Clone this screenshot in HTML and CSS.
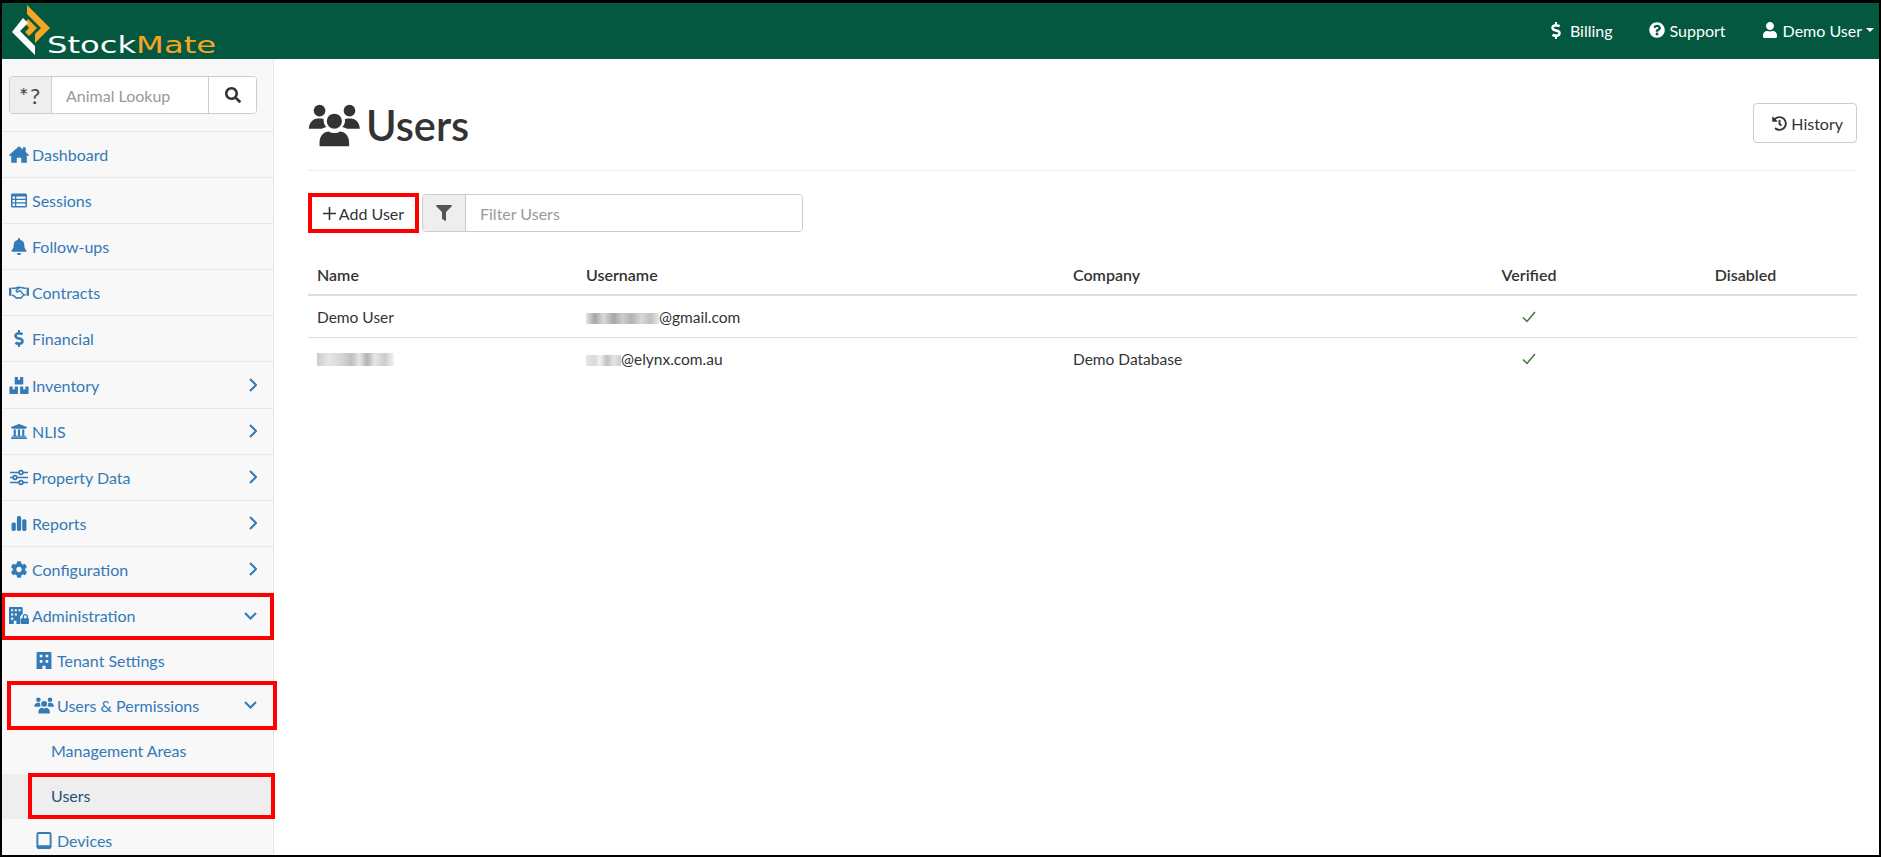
FILE: index.html
```html
<!DOCTYPE html>
<html lang="en">
<head>
    <meta charset="UTF-8">
    <meta name="viewport" content="width=device-width, initial-scale=1.0">
    <title>StockMate - Users</title>
    <link rel="stylesheet" href="styles.css">
</head>
<body>
    <svg class="icon-defs" aria-hidden="true">
        <symbol id="i-users" viewBox="0 0 150 125"><circle cx="33" cy="19" r="17"/><circle cx="120" cy="19" r="17"/><circle cx="76" cy="50" r="22"/><path d="M2 72C2 55 14 42 28 42h10c3 0 5 1 7 2-1 9 2 17 8 23-5 1-10 3-14 5zM150 72c0-17-12-30-26-30h-10c-3 0-5 1-7 2 1 9-2 17-8 23 5 1 10 3 14 5zM33 123v-12c0-18 13-31 27-31 8 6 24 6 32 0 14 0 27 13 27 31v12z"/></symbol>
        <symbol id="i-home" viewBox="0 0 18 15"><path d="M9 0l3.500 3V1H15v4.200L18 8l-1 1-1-.800V15h-5v-4.500H7V15H2V8.200L1 9 0 8z"/></symbol>
        <symbol id="i-search" viewBox="0 0 512 512"><path d="M505 442.7L405.3 343c-4.5-4.5-10.6-7-17-7H372c27.6-35.3 44-79.7 44-128C416 93.1 322.9 0 208 0S0 93.1 0 208s93.1 208 208 208c48.3 0 92.7-16.4 128-44v16.3c0 6.4 2.5 12.5 7 17l99.7 99.7c9.4 9.4 24.6 9.4 33.9 0l28.3-28.3c9.4-9.4 9.4-24.6.1-34zM208 336c-70.7 0-128-57.2-128-128 0-70.7 57.2-128 128-128 70.7 0 128 57.2 128 128 0 70.7-57.2 128-128 128z"/></symbol>
        <symbol id="i-table" viewBox="-2 -1 20 16"><path fill-rule="evenodd" d="M1.500 0h13A1.500 1.500 0 0 1 16 1.500v11a1.500 1.500 0 0 1-1.500 1.500h-13A1.500 1.500 0 0 1 0 12.500v-11A1.500 1.500 0 0 1 1.500 0zM1.500 3v2.300H4V3zm3.800 0v2.300h9.200V3zM1.500 6.500v2.300H4V6.500zm3.800 0v2.300h9.200V6.500zM1.500 10v2.500H4V10zm3.800 0v2.500h9.200V10z"/></symbol>
        <symbol id="i-bell" viewBox="0 0 448 512"><path d="M224 512c35.32 0 63.97-28.65 63.97-64H160.03c0 35.35 28.65 64 63.97 64zm215.39-149.71c-19.32-20.76-55.47-51.99-55.47-154.29 0-77.7-54.48-139.9-127.94-155.16V32c0-17.67-14.32-32-31.98-32s-31.98 14.33-31.98 32v20.84C118.56 68.1 64.08 130.3 64.08 208c0 102.3-36.15 133.53-55.47 154.29-6 6.45-8.66 14.16-8.61 21.71.11 16.4 12.98 32 32.1 32h383.8c19.12 0 32-15.6 32.1-32 .05-7.55-2.61-15.27-8.61-21.71z"/></symbol>
        <symbol id="i-dollar" viewBox="0 0 288 512"><path d="M209.2 233.4l-108-31.6C88.7 198.2 80 186.5 80 173.5c0-16.3 13.2-29.5 29.5-29.5h66.3c12.2 0 24.2 3.7 34.2 10.5 6.1 4.1 14.3 3.1 19.5-2l34.8-34c7.1-6.9 6.1-18.4-1.8-24.5C238 74.8 207.4 64.1 176 64V16c0-8.8-7.2-16-16-16h-32c-8.8 0-16 7.2-16 16v48h-2.5C45.8 64-5.4 118.7.5 183.6c4.2 46.1 39.4 83.6 83.8 96.6l102.5 30c12.5 3.7 21.2 15.3 21.2 28.3 0 16.3-13.2 29.5-29.5 29.5h-66.3C100 368 88 364.3 78 357.5c-6.1-4.1-14.3-3.1-19.5 2l-34.8 34c-7.1 6.9-6.1 18.4 1.8 24.5 24.5 19.2 55.1 29.9 86.5 30v48c0 8.8 7.2 16 16 16h32c8.8 0 16-7.2 16-16v-48.2c46.6-.9 90.3-28.6 105.7-72.7 21.5-61.6-14.6-124.8-72.5-141.7z"/></symbol>
        <symbol id="i-boxes" viewBox="0 0 576 512"><path d="M560 288h-80v96l-32-21.3-32 21.3v-96h-80c-8.8 0-16 7.2-16 16v192c0 8.8 7.2 16 16 16h224c8.8 0 16-7.2 16-16V304c0-8.8-7.2-16-16-16zm-384-64h224c8.8 0 16-7.2 16-16V16c0-8.8-7.2-16-16-16h-80v96l-32-21.3L256 96V0h-80c-8.8 0-16 7.2-16 16v192c0 8.8 7.2 16 16 16zm64 64h-80v96l-32-21.3L96 384v-96H16c-8.8 0-16 7.2-16 16v192c0 8.8 7.2 16 16 16h224c8.8 0 16-7.2 16-16V304c0-8.8-7.2-16-16-16z"/></symbol>
        <symbol id="i-bank" viewBox="0 0 512 512"><path d="M496 128v16a8 8 0 0 1-8 8h-24v12c0 6.627-5.373 12-12 12H60c-6.627 0-12-5.373-12-12v-12H24a8 8 0 0 1-8-8v-16a8 8 0 0 1 4.941-7.392l232-88a7.996 7.996 0 0 1 6.118 0l232 88A8 8 0 0 1 496 128zm-24 304H40c-13.255 0-24 10.745-24 24v16a8 8 0 0 0 8 8h464a8 8 0 0 0 8-8v-16c0-13.255-10.745-24-24-24zM96 192v192H60c-6.627 0-12 5.373-12 12v20h416v-20c0-6.627-5.373-12-12-12h-36V192h-64v192h-64V192h-64v192h-64V192H96z"/></symbol>
        <symbol id="i-sliders" viewBox="0 0 20 16"><g fill="none" stroke="currentColor" stroke-width="1.600"><path d="M1 3h9M14 3h5M1 8h3M8 8h11M1 13h9M14 13h5"/><circle cx="12" cy="3" r="1.900"/><circle cx="6" cy="8" r="1.900"/><circle cx="12" cy="13" r="1.900"/></g></symbol>
        <symbol id="i-bars" viewBox="0 0 16 16"><rect x="1" y="7" width="4" height="8" rx="1.500"/><rect x="6" y="1" width="4" height="14" rx="1.500"/><rect x="11" y="4" width="4" height="11" rx="1.500"/></symbol>
        <symbol id="i-cog" viewBox="0 0 512 512"><path d="M487.4 315.7l-42.6-24.6c4.3-23.2 4.3-47 0-70.2l42.6-24.6c4.9-2.8 7.1-8.6 5.5-14-11.1-35.6-30-67.8-54.7-94.6-3.8-4.1-10-5.1-14.8-2.3L380.8 110c-17.9-15.4-38.5-27.3-60.8-35.1V25.8c0-5.6-3.9-10.5-9.4-11.7-36.7-8.2-74.3-7.8-109.2 0-5.5 1.2-9.4 6.1-9.4 11.7V75c-22.2 7.9-42.8 19.8-60.8 35.1L88.7 85.5c-4.9-2.8-11-1.9-14.8 2.3-24.7 26.7-43.6 58.9-54.7 94.6-1.7 5.4.6 11.2 5.5 14L67.3 221c-4.3 23.2-4.3 47 0 70.2l-42.6 24.6c-4.9 2.8-7.1 8.6-5.5 14 11.1 35.6 30 67.8 54.7 94.6 3.8 4.1 10 5.1 14.8 2.3l42.6-24.6c17.9 15.4 38.5 27.3 60.8 35.1v49.2c0 5.6 3.9 10.5 9.4 11.7 36.7 8.2 74.3 7.8 109.2 0 5.5-1.2 9.4-6.1 9.4-11.7v-49.2c22.2-7.9 42.8-19.8 60.8-35.1l42.6 24.6c4.9 2.8 11 1.9 14.8-2.3 24.7-26.7 43.6-58.9 54.7-94.6 1.5-5.5-.7-11.3-5.6-14.1zM256 336c-44.1 0-80-35.9-80-80s35.9-80 80-80 80 35.9 80 80-35.9 80-80 80z"/></symbol>
        <symbol id="i-building" viewBox="0 0 14 16"><path fill-rule="evenodd" d="M1 0h12a1 1 0 0 1 1 1v15H8.500v-3h-3v3H0V1a1 1 0 0 1 1-1zM3 2.500v2.500h2.500V2.500zm5.500 0v2.500H11V2.500zM3 7.500V10h2.500V7.500zm5.500 0V10H11V7.500z"/></symbol>
        <symbol id="i-admin" viewBox="0 0 19 16"><path fill-rule="evenodd" d="M1 0h11a1 1 0 0 1 1 1v5.500a4 4 0 0 0-2.500 3V16H7v-3H4.500v3H0V1a1 1 0 0 1 1-1zM2 2v2h2V2zm3.500 0v2h2V2zM9 2v2h2V2zM2 6v2h2V6zm3.500 0v2h2V6zM2 10v2h2v-2z"/><path fill-rule="evenodd" d="M13 10.500V9a2.500 2.500 0 0 1 5 0v1.500h.200a.8.800 0 0 1 .8.800v3.900a.8.800 0 0 1-.8.800h-6.400a.8.800 0 0 1-.8-.8v-3.900a.8.800 0 0 1 .8-.8zm1.300 0h2.400V9a1.200 1.200 0 0 0-2.400 0z"/></symbol>
        <symbol id="i-handshake" viewBox="0 0 21 14"><g fill="none" stroke="currentColor" stroke-width="1.500" stroke-linejoin="round"><path d="M3 2.500h3.500l3.500-1 4 .5 2.500.5H18M3 10h1.500l3.500 3 1.500-.5 3 .5 3-3.500h2.500"/><path d="M10.500 2l-3 3 1 1.500 3-1.500 4.500 5"/></g><path d="M0 2h2.500v8.500H0zM18.500 2H21v8.500h-2.500z"/></symbol>
        <symbol id="i-tablet" viewBox="0 0 16 18"><path fill-rule="evenodd" d="M2.500 0h11A2.500 2.500 0 0 1 16 2.500v13a2.500 2.500 0 0 1-2.500 2.500h-11A2.500 2.500 0 0 1 0 15.500v-13A2.500 2.500 0 0 1 2.500 0zM2 2v12h12V2z"/></symbol>
        <symbol id="i-user" viewBox="0 0 448 512"><path d="M224 256c70.700 0 128-57.300 128-128S294.700 0 224 0 96 57.300 96 128s57.300 128 128 128zm89.600 32h-16.700c-22.200 10.200-46.900 16-72.900 16s-50.600-5.800-72.900-16h-16.700C60.200 288 0 348.200 0 422.400V464c0 26.500 21.500 48 48 48h352c26.500 0 48-21.500 48-48v-41.600c0-74.200-60.200-134.400-134.400-134.400z"/></symbol>
        <symbol id="i-question" viewBox="0 0 512 512"><path d="M504 256c0 136.997-111.043 248-248 248S8 392.997 8 256C8 119.083 119.043 8 256 8s248 111.083 248 248zM262.655 90c-54.497 0-89.255 22.957-116.549 63.758-3.536 5.286-2.353 12.415 2.715 16.258l34.699 26.310c5.205 3.947 12.621 3.008 16.665-2.122 17.864-22.658 30.113-35.797 57.303-35.797 20.429 0 45.698 13.148 45.698 32.958 0 14.976-12.363 22.667-32.534 33.976C247.128 238.528 216 254.941 216 296v4c0 6.627 5.373 12 12 12h56c6.627 0 12-5.373 12-12v-1.333c0-28.462 83.186-29.647 83.186-106.667 0-58.002-60.165-102-116.531-102zM256 338c-25.365 0-46 20.635-46 46 0 25.364 20.635 46 46 46s46-20.636 46-46c0-25.365-20.635-46-46-46z"/></symbol>
        <symbol id="i-filter" viewBox="0 0 512 512"><path d="M487.976 0H24.028C2.710 0-8.047 25.866 7.058 40.971L192 225.941V432c0 7.831 3.821 15.170 10.237 19.662l80 55.980C298.020 518.690 320 507.493 320 487.980V225.941l184.947-184.970C520.021 25.896 509.338 0 487.976 0z"/></symbol>
        <symbol id="i-history" viewBox="0 0 512 512"><path d="M504 255.531c.253 136.640-111.180 248.372-247.820 248.468-59.015.042-113.223-20.530-155.822-54.911-11.077-8.940-11.905-25.541-1.839-35.607l11.267-11.267c8.609-8.609 22.353-9.551 31.891-1.984C173.062 425.135 212.781 440 256 440c101.705 0 184-82.311 184-184 0-101.705-82.311-184-184-184-48.814 0-93.149 18.969-126.068 49.932l50.754 50.754c10.080 10.080 2.941 27.314-11.313 27.314H24c-8.837 0-16-7.163-16-16V38.627c0-14.254 17.234-21.393 27.314-11.314l49.372 49.372C129.209 34.136 189.552 8 256 8c136.810 0 247.747 110.780 248 247.531zm-180.912 78.784l9.823-12.630c8.138-10.463 6.253-25.542-4.210-33.679L288 256.349V152c0-13.255-10.745-24-24-24h-16c-13.255 0-24 10.745-24 24v135.651l65.409 50.874c10.463 8.137 25.541 6.253 33.679-4.210z"/></symbol>
        <symbol id="i-right" viewBox="0 0 8 14"><path d="M1 1l6 6-6 6" fill="none" stroke="currentColor" stroke-width="2"/></symbol>
        <symbol id="i-down" viewBox="0 0 13 8"><path d="M1 1l5.500 5.500L12 1" fill="none" stroke="currentColor" stroke-width="2"/></symbol>
        <symbol id="i-check" viewBox="0 0 14 12"><path d="M1 6.500L5 10.500 13 1" fill="none" stroke="currentColor" stroke-width="1.500"/></symbol>
        <symbol id="i-plus" viewBox="0 0 13 13"><path d="M6.500 0v13M0 6.500h13" fill="none" stroke="currentColor" stroke-width="1.600"/></symbol>
    </svg>

    <div class="frame">
        <header class="navbar">
            <a class="brand" href="#">
                <svg class="brand-mark" viewBox="0 0 40 52">
                    <path fill="#f5a623" d="M17 0l23 23-15 15v-9l6-6L17 9zM18 14l9 9-8 8-4-4 4-4-4-5z"/>
                    <path fill="#fff" d="M13 13l5 5-8 8 15 15v9L2 27z"/>
                </svg>
                <span class="brand-name">Stock<span class="brand-accent">Mate</span></span>
            </a>
            <nav class="top-links">
                <a href="#"><svg class="top-dollar"><use href="#i-dollar"/></svg>Billing</a>
                <a href="#"><svg class="top-icon"><use href="#i-question"/></svg>Support</a>
                <a href="#"><svg class="top-icon"><use href="#i-user"/></svg>Demo User<span class="caret"></span></a>
            </nav>
        </header>

        <div class="layout">
            <aside class="sidebar">
                <div class="lookup">
                    <div class="input-group">
                        <span class="addon addon-text">*?</span>
                        <input type="text" placeholder="Animal Lookup">
                        <button class="addon-btn" type="button"><svg class="search-icon"><use href="#i-search"/></svg></button>
                    </div>
                </div>
                <ul class="side-nav">
                    <li><a href="#"><span class="nav-icon"><svg><use href="#i-home"/></svg></span>Dashboard</a></li>
                    <li><a href="#"><span class="nav-icon"><svg><use href="#i-table"/></svg></span>Sessions</a></li>
                    <li><a href="#"><span class="nav-icon"><svg><use href="#i-bell"/></svg></span>Follow-ups</a></li>
                    <li><a href="#"><span class="nav-icon"><svg><use href="#i-handshake"/></svg></span>Contracts</a></li>
                    <li><a href="#"><span class="nav-icon"><svg><use href="#i-dollar"/></svg></span>Financial</a></li>
                    <li><a href="#"><span class="nav-icon"><svg><use href="#i-boxes"/></svg></span>Inventory<svg class="chevron"><use href="#i-right"/></svg></a></li>
                    <li><a href="#"><span class="nav-icon"><svg><use href="#i-bank"/></svg></span>NLIS<svg class="chevron"><use href="#i-right"/></svg></a></li>
                    <li><a href="#"><span class="nav-icon"><svg><use href="#i-sliders"/></svg></span>Property Data<svg class="chevron"><use href="#i-right"/></svg></a></li>
                    <li><a href="#"><span class="nav-icon"><svg><use href="#i-bars"/></svg></span>Reports<svg class="chevron"><use href="#i-right"/></svg></a></li>
                    <li><a href="#"><span class="nav-icon"><svg><use href="#i-cog"/></svg></span>Configuration<svg class="chevron"><use href="#i-right"/></svg></a></li>
                    <li class="open"><a class="marked mark-admin" href="#"><span class="nav-icon"><svg><use href="#i-admin"/></svg></span>Administration<svg class="chevron-down"><use href="#i-down"/></svg></a>
                        <ul class="sub-nav">
                            <li><a href="#"><span class="nav-icon"><svg><use href="#i-building"/></svg></span>Tenant Settings</a></li>
                            <li><a class="marked mark-perms" href="#"><span class="nav-icon"><svg><use href="#i-users"/></svg></span>Users &amp; Permissions<svg class="chevron-down"><use href="#i-down"/></svg></a></li>
                            <li><a class="leaf" href="#">Management Areas</a></li>
                            <li><a class="leaf active marked mark-users" href="#">Users</a></li>
                            <li><a href="#"><span class="nav-icon"><svg><use href="#i-tablet"/></svg></span>Devices</a></li>
                        </ul>
                    </li>
                </ul>
            </aside>

            <main class="content">
                <div class="page-header">
                    <h1><svg class="title-icon"><use href="#i-users"/></svg>Users</h1>
                    <button class="btn" type="button"><svg class="history-icon"><use href="#i-history"/></svg>History</button>
                </div>

                <div class="toolbar">
                    <button class="btn-add marked mark-add" type="button"><svg class="plus-icon"><use href="#i-plus"/></svg>Add User</button>
                    <div class="input-group filter">
                        <span class="addon addon-filter"><svg class="filter-icon"><use href="#i-filter"/></svg></span>
                        <input type="text" placeholder="Filter Users">
                    </div>
                </div>

                <table class="users">
                    <colgroup>
                        <col class="col-name"><col class="col-username"><col class="col-company"><col class="col-verified"><col class="col-disabled">
                    </colgroup>
                    <thead>
                        <tr><th>Name</th><th>Username</th><th>Company</th><th class="center">Verified</th><th class="center">Disabled</th></tr>
                    </thead>
                    <tbody>
                        <tr>
                            <td>Demo User</td>
                            <td><span class="redacted redacted-long"></span>@gmail.com</td>
                            <td></td>
                            <td class="center"><svg class="check"><use href="#i-check"/></svg></td>
                            <td></td>
                        </tr>
                        <tr>
                            <td><span class="redacted redacted-name"></span></td>
                            <td><span class="redacted redacted-short"></span>@elynx.com.au</td>
                            <td>Demo Database</td>
                            <td class="center"><svg class="check"><use href="#i-check"/></svg></td>
                            <td></td>
                        </tr>
                    </tbody>
                </table>
            </main>
        </div>
    </div>
</body>
</html>
```

FILE: styles.css
```css
* {
    box-sizing: border-box;
}
html, body {
    margin: 0;
    height: 100%;
}
body {
    font-family: Lato, "Open Sans", Arial, sans-serif;
    font-size: 16px;
    color: #333;
    background-color: #fff;
}
a {
    text-decoration: none;
    color: inherit;
}
svg {
    fill: currentColor;
    display: block;
}
.icon-defs {
    display: none;
}
.frame {
    height: 100vh;
    overflow: hidden;
    display: flex;
    flex-direction: column;
    border: 2px solid #000;
    border-top-width: 3px;
    background-color: #fff;
}

/* navbar */
.navbar {
    flex: none;
    height: 56px;
    display: flex;
    justify-content: space-between;
    background-color: #03583f;
    color: #fff;
}
.brand {
    display: flex;
    padding-left: 8px;
}
.brand-mark {
    width: 40px;
    height: 52px;
    margin-top: 2px;
}
.brand-name {
    display: block;
    margin: 28px 0 0 -3px;
    font-family: "DejaVu Sans", sans-serif;
    font-size: 23px;
    line-height: 28px;
    transform: scaleX(1.4);
    transform-origin: left center;
}
.brand-accent {
    color: #f5a623;
}
.top-links {
    display: flex;
    align-items: center;
    gap: 36px;
    padding: 0 5px 2px 0;
}
.top-links a {
    display: flex;
    align-items: center;
}
.top-icon {
    width: 16px;
    height: 16px;
    margin-right: 5px;
}
.top-dollar {
    width: 10px;
    height: 17px;
    margin-right: 9px;
}
.caret {
    margin-left: 4px;
    border-top: 4px solid #fff;
    border-left: 4px solid transparent;
    border-right: 4px solid transparent;
}

.layout {
    flex: 1;
    display: flex;
    min-height: 0;
}

/* sidebar */
.sidebar {
    flex: none;
    width: 272px;
    background-color: #f8f8f8;
    border-right: 1px solid #e7e7e7;
}
.lookup {
    height: 73px;
    padding: 17px 16px 0 7px;
    border-bottom: 1px solid #e7e7e7;
}
.input-group {
    display: flex;
    height: 38px;
    border: 1px solid #ccc;
    border-radius: 4px;
    background-color: #fff;
    overflow: hidden;
}
.input-group input {
    flex: 1;
    min-width: 0;
    border: 0;
    padding: 0 14px;
    font: inherit;
    color: #555;
    outline: none;
}
.input-group input::placeholder {
    color: #999;
    opacity: 1;
}
.addon {
    flex: none;
    display: flex;
    align-items: center;
    justify-content: center;
    background-color: #eee;
    border-right: 1px solid #ccc;
}
.addon-text {
    width: 42px;
    font-size: 22px;
    letter-spacing: 2px;
    color: #444;
}
.addon-btn {
    flex: none;
    width: 48px;
    display: flex;
    align-items: center;
    justify-content: center;
    padding: 0;
    border: 0;
    border-left: 1px solid #ccc;
    background-color: #fff;
    color: #333;
}
.search-icon {
    width: 16px;
    height: 16px;
}
.side-nav, .sub-nav {
    list-style: none;
    margin: 0;
    padding: 0;
    color: #337ab7;
}
.side-nav > li > a {
    height: 46.1px;
    display: flex;
    align-items: center;
    padding: 0 16px 0 7px;
    border-bottom: 1px solid #e7e7e7;
}
.side-nav > li.open > a {
    border-bottom: 0;
}
.sub-nav a {
    height: 45px;
    display: flex;
    align-items: center;
    padding: 0 16px 3px 32px;
}
.sub-nav a.leaf {
    padding-left: 49px;
}
.sub-nav a.active {
    background-color: #eee;
    color: #23527c;
}
.nav-icon {
    flex: none;
    width: 20px;
    height: 17px;
    margin-right: 3px;
    display: flex;
    align-items: center;
    justify-content: center;
}
.nav-icon svg {
    width: 100%;
    height: 100%;
}
.chevron {
    width: 8px;
    height: 14px;
    margin-left: auto;
}
.chevron-down {
    width: 13px;
    height: 8px;
    margin-left: auto;
}

/* red annotation boxes */
.marked {
    position: relative;
}
.marked::after {
    content: "";
    position: absolute;
    border: 4px solid #f00;
    pointer-events: none;
}
.mark-admin::after {
    inset: 0 -1px -1px -1px;
}
.mark-perms::after {
    inset: -3px -4px -1px 5px;
}
.mark-users::after {
    inset: -1px -2px 0 26px;
}
.mark-add::after {
    inset: -1px 0 0;
}

/* main content */
.content {
    flex: 1;
    min-width: 0;
    padding: 0 22px 0 34px;
}
.page-header {
    height: 112px;
    display: flex;
    align-items: center;
    justify-content: space-between;
    border-bottom: 1px solid #eee;
}
h1 {
    margin: 23px 0 0;
    display: flex;
    align-items: center;
    font-size: 41.5px;
    font-weight: 600;
    line-height: 1.1;
}
.title-icon {
    width: 52px;
    height: 43px;
    margin-right: 6px;
}
.btn {
    display: flex;
    align-items: center;
    height: 40px;
    padding: 0 13px 0 18px;
    margin-top: 17px;
    font: inherit;
    color: #333;
    background-color: #fff;
    border: 1px solid #ccc;
    border-radius: 4px;
}
.history-icon {
    width: 15px;
    height: 15px;
    margin-right: 4px;
}
.toolbar {
    display: flex;
    gap: 3px;
    margin-top: 23px;
}
.btn-add {
    width: 111px;
    height: 39px;
    display: flex;
    align-items: center;
    justify-content: center;
    padding: 0;
    border: 0;
    font: inherit;
    color: #333;
    background-color: #fff;
}
.plus-icon {
    width: 13px;
    height: 13px;
    margin-right: 3px;
}
.filter {
    width: 381px;
}
.addon-filter {
    width: 43px;
}
.filter-icon {
    width: 16px;
    height: 16px;
    color: #555;
}
.users {
    width: 100%;
    margin-top: 22px;
    border-collapse: collapse;
    table-layout: fixed;
}
.col-name { width: 269px; }
.col-username { width: 487px; }
.col-company { width: 360px; }
.col-verified { width: 210px; }
.users th, .users td {
    text-align: left;
    padding: 0 9px;
}
.users th {
    height: 40px;
    font-weight: 600;
    border-bottom: 2px solid #ddd;
}
.users td {
    height: 42px;
    font-size: 15.5px;
    padding-top: 1px;
    border-bottom: 1px solid #ddd;
}
.users tbody tr:last-child td {
    border-bottom: 0;
}
.users .center {
    text-align: center;
}
.check {
    display: inline-block;
    width: 14px;
    height: 12px;
    color: #3c763d;
}
.redacted {
    display: inline-block;
    height: 11px;
    vertical-align: -1px;
    opacity: 0.75;
}
.redacted-long {
    width: 73px;
    background: linear-gradient(90deg, #ddd, #888 12%, #ccc 24%, #8a8a8a 38%, #bbb 50%, #999 62%, #ccc 76%, #aaa 88%, #ddd);
}
.redacted-short {
    width: 35px;
    background: linear-gradient(90deg, #ddd, #ccc 25%, #eee 40%, #aaa 60%, #ddd 80%, #bbb);
}
.redacted-name {
    width: 77px;
    height: 13px;
    background: linear-gradient(90deg, #bbb, #ddd 15%, #ccc 30%, #aaa 45%, #ddd 55%, #999 65%, #ddd 75%, #bbb 88%, #eee);
}
```
